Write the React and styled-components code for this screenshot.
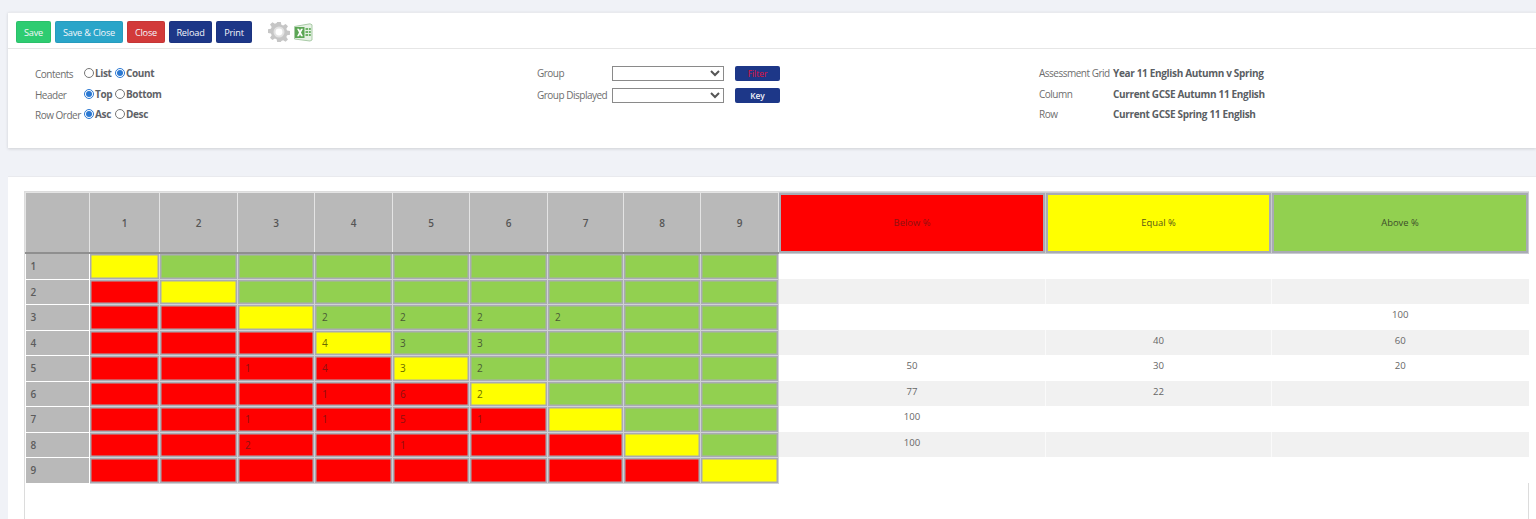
import React from "react";
import styled, { createGlobalStyle } from "styled-components";

const Global = createGlobalStyle`
  html, body { margin: 0; padding: 0; height: 519px; overflow: hidden; background: #f0f2f7; }
  body { font-family: "Open Sans", "Liberation Sans", sans-serif; font-size: 10px; color: #666; }
`;

const Page = styled.div`
  display: flex;
  flex-direction: column;
  height: 519px;
  width: 1536px;
  padding: 12px 0 0 8px;
  box-sizing: border-box;
`;

const Card = styled.section`
  background: #fff;
  border-top: 1px solid #e9eaee;
  box-shadow: 0 1px 3px rgba(0, 0, 0, 0.14);
`;

const TopCard = styled(Card)`
  height: 136px;
  box-sizing: border-box;
  flex: none;
`;

const GridCard = styled(Card)`
  margin-top: 28px;
  flex: 1;
  display: flex;
  padding: 14px 0 0 16px;
  min-height: 0;
  box-shadow: none;
`;

const Toolbar = styled.div`
  display: flex;
  align-items: center;
  height: 36px;
  padding: 8px 0 5px 8px;
  box-sizing: border-box;
  gap: 4px;
  border-bottom: 1px solid #e6e6e6;
`;

const colors = {
  green: "#2ecc71",
  teal: "#2aa5c9",
  red: "#d23a3a",
  navy: "#1d3788",
};

const ToolButton = styled.button`
  height: 22px;
  padding: 0;
  width: ${(p) => p.$w}px;
  border: 1px solid rgba(0, 0, 0, 0.06);
  border-radius: 2px;
  background: ${(p) => colors[p.$tone]};
  color: #f4f6fa;
  font: 400 9.2px "Open Sans", sans-serif;
  letter-spacing: -0.2px;
`;

const Icons = styled.div`
  display: flex;
  align-items: center;
  gap: 3px;
  margin-left: 12px;
`;

const Form = styled.div`
  display: grid;
  grid-template-columns: 502px 502px 1fr;
  padding: 15px 0 0 27px;
`;

const RadioGrid = styled.div`
  display: grid;
  grid-template-columns: 49px 31px 1fr;
  grid-auto-rows: 20.5px;
  align-items: center;
`;

const Label = styled.span`
  font-size: 10px;
  letter-spacing: -0.5px;
  color: #6e6e6e;
  white-space: nowrap;
`;

const Option = styled.label`
  display: flex;
  align-items: center;
  font-weight: 700;
  font-size: 10px;
  letter-spacing: -0.35px;
  color: #5f6368;
  margin-top: -2px;
`;

const Radio = styled.input.attrs({ type: "radio" })`
  width: 10px;
  height: 10px;
  margin: 0 1px 0 0;
  accent-color: #2a78d2;
`;

const FilterGrid = styled.div`
  display: grid;
  grid-template-columns: 75px 112px 45px;
  grid-auto-rows: 22px;
  align-items: center;
  margin-top: -2px;
`;

const Select = styled.select`
  width: 112px;
  height: 15px;
  padding: 0;
  border: 1px solid #8a8a8a;
  background: #fff;
  color: #555;
  font-size: 9px;
  border-radius: 0;
`;

const SmallButton = styled.button`
  width: 45px;
  height: 15px;
  margin-left: 11px;
  padding: 0;
  border: 0;
  border-radius: 2px;
  background: #1d3788;
  color: ${(p) => (p.$alert ? "#e3103a" : "#eef1f8")};
  font: 400 8.4px "Open Sans", sans-serif;
  font-weight: ${(p) => (p.$alert ? 400 : 600)};
`;

const InfoGrid = styled.div`
  display: grid;
  grid-template-columns: 74px 1fr;
  grid-auto-rows: 20.5px;
  align-items: center;
  margin-top: -1px;
`;

const Value = styled.span`
  font-weight: 700;
  font-size: 10px;
  letter-spacing: -0.33px;
  color: #5a5e63;
  white-space: nowrap;
`;

const TableFrame = styled.div`
  width: 1503px;
  border: 1px solid #dcdcdc;
  border-bottom: 0;
`;

const Table = styled.table`
  width: 1503px;
  table-layout: fixed;
  border-collapse: collapse;
  font-size: 10px;
  color: #555;
`;

const HeadCell = styled.th`
  height: 59px;
  padding: 0;
  background: #b9b9b9;
  border: 1px solid #e4e4e4;
  border-bottom: 2px solid #8f8f8f;
  font-weight: 600;
  color: #555;
  font-size: 10px;
`;

const StatHead = styled.th`
  height: 59px;
  padding: 0;
  background: ${(p) => p.$bg};
  border: 1px solid #c9cad0;
  box-shadow: inset 0 0 0 2px #a8abb3;
  font-weight: 400;
  font-size: 9.4px;
  color: ${(p) => p.$ink};
`;

const Row = styled.tr`
  height: ${(p) => (p.$tall ? 26 : 25)}px;
`;

const RowHead = styled.td`
  padding: 0 0 0 5px;
  background: #b9b9b9;
  border: 1px solid #fff;
  border-left: 0;
  color: #5c5c5c;
  font-weight: 600;
`;

const Cell = styled.td`
  padding: 0 0 0 7px;
  background: ${(p) => p.$bg};
  border: 1px solid #d0d1d6;
  box-shadow: inset 0 0 0 1.5px #a9abb2;
  color: ${(p) => p.$ink};
`;

const StatCell = styled.td`
  padding: 0 0 5px;
  text-align: center;
  background: ${(p) => (p.$striped ? "#f1f1f1" : "#fff")};
  border-left: 1px solid ${(p) => (p.$striped ? "#fafafa" : "#fff")};
  color: #666;
  font-size: 9.6px;
`;

const Gear = () => (
  <svg width="22" height="22" viewBox="0 0 24 24">
    <path
      fill="#c6c6c6"
      d="M10 1h4l.6 3.200 1.900.8 2.700-1.800 2.600 2.600-1.800 2.700.8 1.900 3.200.6v3.900l-3.200.6-.8 1.900 1.800 2.700-2.600 2.600-2.700-1.800-1.900.8L14 23h-4l-.6-3.200-1.900-.8-2.700 1.800-2.600-2.600L4 15.500l-.8-1.900L0 13V9.100l3.200-.6.8-1.900-1.800-2.700 2.600-2.600 2.700 1.800 1.900-.8z"
    />
    <circle cx="12" cy="12" r="6" fill="#e2e2e2" />
    <circle cx="12" cy="12" r="3.800" fill="#fff" />
  </svg>
);

const Excel = () => (
  <svg width="20" height="19" viewBox="0 0 20 19">
    <path fill="#e6f1e4" stroke="#a9cba7" d="M1.500 3.500 17 .8l2 1V17l-2 1L1.500 16z" />
    <path fill="#5ca655" d="M2 4h9.500v11H2z" />
    <path fill="#fff" d="M4 5.800h2l1 2 1-2h2L8 9.500l2 3.700H8l-1-2-1 2H4l2-3.700z" />
    <path fill="#6fb368" d="M12.500 5H15v2h-2.500zM15.800 5h2v2h-2zM12.500 8H15v2h-2.500zM15.800 8h2v2h-2zM12.500 11H15v2h-2.500zM15.800 11h2v2h-2z" />
  </svg>
);

const GREEN = "#92d050";
const YELLOW = "#ffff00";
const RED = "#ff0000";
const widths = [64, 70, 78, 77, 78, 77, 78, 76, 77, 78, 267, 226, 257];

const counts = [
  {},
  {},
  { 4: 2, 5: 2, 6: 2, 7: 2 },
  { 4: 4, 5: 3, 6: 3 },
  { 3: 1, 4: 4, 5: 3, 6: 2 },
  { 4: 1, 5: 6, 6: 2 },
  { 3: 1, 4: 1, 5: 5, 6: 1 },
  { 3: 2, 5: 1 },
  {},
];

const stats = [
  ["", "", ""],
  ["", "", ""],
  ["", "", "100"],
  ["", "40", "60"],
  ["50", "30", "20"],
  ["77", "22", ""],
  ["100", "", ""],
  ["100", "", ""],
  ["", "", ""],
];

const nine = [1, 2, 3, 4, 5, 6, 7, 8, 9];

const cellColor = (r, c) => (c === r ? YELLOW : c > r ? GREEN : RED);
const cellInk = (r, c) => (c < r ? "#8e1010" : c === r ? "#6a6a00" : "#4a5a35");

export default function App() {
  return (
    <Page>
      <Global />
      <TopCard>
        <Toolbar>
          <ToolButton $tone="green" $w={35}>Save</ToolButton>
          <ToolButton $tone="teal" $w={68}>Save &amp; Close</ToolButton>
          <ToolButton $tone="red" $w={38}>Close</ToolButton>
          <ToolButton $tone="navy" $w={43}>Reload</ToolButton>
          <ToolButton $tone="navy" $w={36}>Print</ToolButton>
          <Icons>
            <Gear />
            <Excel />
          </Icons>
        </Toolbar>
        <Form>
          <RadioGrid>
            <Label>Contents</Label>
            <Option><Radio name="contents" />List</Option>
            <Option><Radio name="contents" defaultChecked />Count</Option>
            <Label>Header</Label>
            <Option><Radio name="header" defaultChecked />Top</Option>
            <Option><Radio name="header" />Bottom</Option>
            <Label>Row Order</Label>
            <Option><Radio name="order" defaultChecked />Asc</Option>
            <Option><Radio name="order" />Desc</Option>
          </RadioGrid>
          <FilterGrid>
            <Label>Group</Label>
            <Select />
            <SmallButton $alert>Filter</SmallButton>
            <Label>Group Displayed</Label>
            <Select />
            <SmallButton>Key</SmallButton>
          </FilterGrid>
          <InfoGrid>
            <Label>Assessment Grid</Label>
            <Value>Year 11 English Autumn v Spring</Value>
            <Label>Column</Label>
            <Value>Current GCSE Autumn 11 English</Value>
            <Label>Row</Label>
            <Value>Current GCSE Spring 11 English</Value>
          </InfoGrid>
        </Form>
      </TopCard>
      <GridCard>
        <TableFrame>
          <Table>
            <colgroup>
              {widths.map((w, i) => (
                <col key={i} style={{ width: w }} />
              ))}
            </colgroup>
            <thead>
              <tr>
                <HeadCell />
                {nine.map((n) => (
                  <HeadCell key={n}>{n}</HeadCell>
                ))}
                <StatHead $bg={RED} $ink="#8e1010">Below %</StatHead>
                <StatHead $bg={YELLOW} $ink="#55551a">Equal %</StatHead>
                <StatHead $bg={GREEN} $ink="#3d4d2a">Above %</StatHead>
              </tr>
            </thead>
            <tbody>
              {nine.map((r) => (
                <Row key={r} $tall={r % 2 === 1}>
                  <RowHead>{r}</RowHead>
                  {nine.map((c) => (
                    <Cell key={c} $bg={cellColor(r, c)} $ink={cellInk(r, c)}>
                      {counts[r - 1][c]}
                    </Cell>
                  ))}
                  {stats[r - 1].map((s, i) => (
                    <StatCell key={i} $striped={r % 2 === 0}>{s}</StatCell>
                  ))}
                </Row>
              ))}
            </tbody>
          </Table>
        </TableFrame>
      </GridCard>
    </Page>
  );
}
